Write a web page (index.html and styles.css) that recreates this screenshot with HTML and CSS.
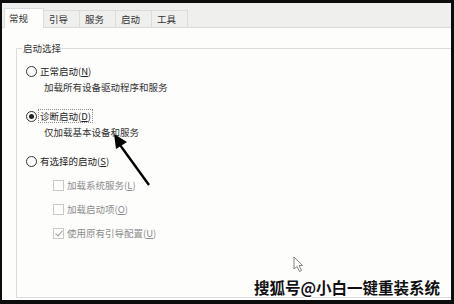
FILE: index.html
```html
<!DOCTYPE html>
<html lang="zh-CN">
<head>
    <meta charset="UTF-8">
    <title>系统配置 - 常规</title>
    <link rel="stylesheet" href="styles.css">
</head>
<body>
    <div class="window">
        <div class="tabs">
            <div class="tab active">常规</div>
            <div class="tab">引导</div>
            <div class="tab">服务</div>
            <div class="tab">启动</div>
            <div class="tab">工具</div>
        </div>

        <div class="group">
            <div class="group-title">启动选择</div>

            <div class="option">
                <div class="choice"><span class="radio"></span><span class="label">正常启动(<u>N</u>)</span></div>
                <div class="desc">加载所有设备驱动程序和服务</div>
            </div>

            <div class="option">
                <div class="choice"><span class="radio checked"></span><span class="label focus">诊断启动(<u>D</u>)</span></div>
                <div class="desc">仅加载基本设备和服务</div>
            </div>

            <div class="option">
                <div class="choice"><span class="radio"></span><span class="label">有选择的启动(<u>S</u>)</span></div>
                <div class="checks">
                    <div class="check"><span class="box"></span><span>加载系统服务(<u>L</u>)</span></div>
                    <div class="check"><span class="box"></span><span>加载启动项(<u>O</u>)</span></div>
                    <div class="check"><span class="box checked"></span><span>使用原有引导配置(<u>U</u>)</span></div>
                </div>
            </div>
        </div>

        <!-- annotation arrow and mouse pointer, in page coordinates -->
        <svg class="overlay" viewBox="2 3 449 297">
            <line x1="149" y1="185" x2="120" y2="145" stroke="#000" stroke-width="2.4"/>
            <polygon points="114,134 116,149 127,142" fill="#000"/>
            <path d="M294 257 L294 269 L297 266.5 L299.5 271.5 L301.5 270.5 L299 265.5 L302.5 265.5 Z" fill="#fff" stroke="#666" stroke-width="0.8"/>
        </svg>

        <div class="watermark">搜狐号@小白一键重装系统</div>
    </div>
</body>
</html>
```

FILE: styles.css
```css
* {
    margin: 0;
    padding: 0;
    box-sizing: border-box;
}

body {
    background: #0d0d0d;
    height: 304px;
    overflow: hidden;
    font-family: 'Noto Sans CJK SC', sans-serif;
    font-size: 9.5px;
    color: #2b2b2b;
}

.window {
    position: relative;
    margin: 3px 3px 0 2px;
    height: 297px;
    background: #fdfdfc;
    overflow: hidden;
}

.tabs {
    display: flex;
    align-items: flex-end;
    height: 25px;
    padding-left: 2px;
    background: #efefee;
    border-bottom: 1px solid #dadada;
}

.tab {
    height: 17px;
    line-height: 16px;
    padding: 0 11px 0 5px;
    border-top: 1px solid #dcdcdc;
    border-right: 1px solid #dcdcdc;
    color: #333;
}

.tab.active {
    height: 20px;
    line-height: 18px;
    margin-bottom: -1px;
    padding: 0 15px 0 4px;
    border-left: 1px solid #dcdcdc;
    background: #fdfdfc;
}

.group {
    position: relative;
    height: 250px;
    margin: 20px 0 0 14px;
    padding: 14px 0 0 9px;
    border: 1px solid #dcdcdc;
    border-right: none;
}

.group-title {
    position: absolute;
    top: -7px;
    left: 5px;
    padding: 0 1px;
    line-height: 12px;
    background: #fdfdfc;
    color: #333;
}

.option {
    margin-bottom: 13px;
}

.choice {
    display: flex;
    align-items: center;
    height: 16px;
    gap: 1px;
    color: #222;
}

.radio {
    position: relative;
    width: 11px;
    height: 11px;
    border: 1px solid #333;
    border-radius: 50%;
    background: #fff;
}

.radio.checked::after {
    content: '';
    position: absolute;
    top: 2px;
    left: 2px;
    width: 5px;
    height: 5px;
    border-radius: 50%;
    background: #222;
}

.label {
    padding: 0 1px;
    border: 1px solid transparent;
    line-height: 12px;
}

.label.focus {
    border: 1px dotted #8a8a8a;
}

.desc {
    padding-left: 18px;
    line-height: 16px;
    color: #333;
}

.checks {
    display: flex;
    flex-direction: column;
    gap: 8px;
    margin-top: 8px;
    padding-left: 27px;
}

.check {
    display: flex;
    align-items: center;
    gap: 3px;
    height: 16px;
    color: #8c8c8c;
}

.box {
    position: relative;
    width: 11px;
    height: 11px;
    border: 1px solid #c9c9c9;
    background: #fdfdfc;
}

.box.checked::after {
    content: '';
    position: absolute;
    left: 3px;
    top: 0;
    width: 3px;
    height: 6px;
    border-right: 1px solid #9a9a9a;
    border-bottom: 1px solid #9a9a9a;
    transform: rotate(40deg);
}

u {
    text-decoration-thickness: 1px;
    text-underline-offset: 1px;
}

.overlay {
    position: absolute;
    top: 0;
    left: 0;
    width: 449px;
    height: 297px;
}

.watermark {
    position: absolute;
    right: 11px;
    bottom: 4px;
    font-size: 15.5px;
    line-height: 18px;
    font-weight: bold;
    color: #111;
    text-shadow: 1px 0 #fff, -1px 0 #fff, 0 1px #fff, 0 -1px #fff,
                 1px 1px #fff, -1px -1px #fff, 1px -1px #fff, -1px 1px #fff;
}
```
